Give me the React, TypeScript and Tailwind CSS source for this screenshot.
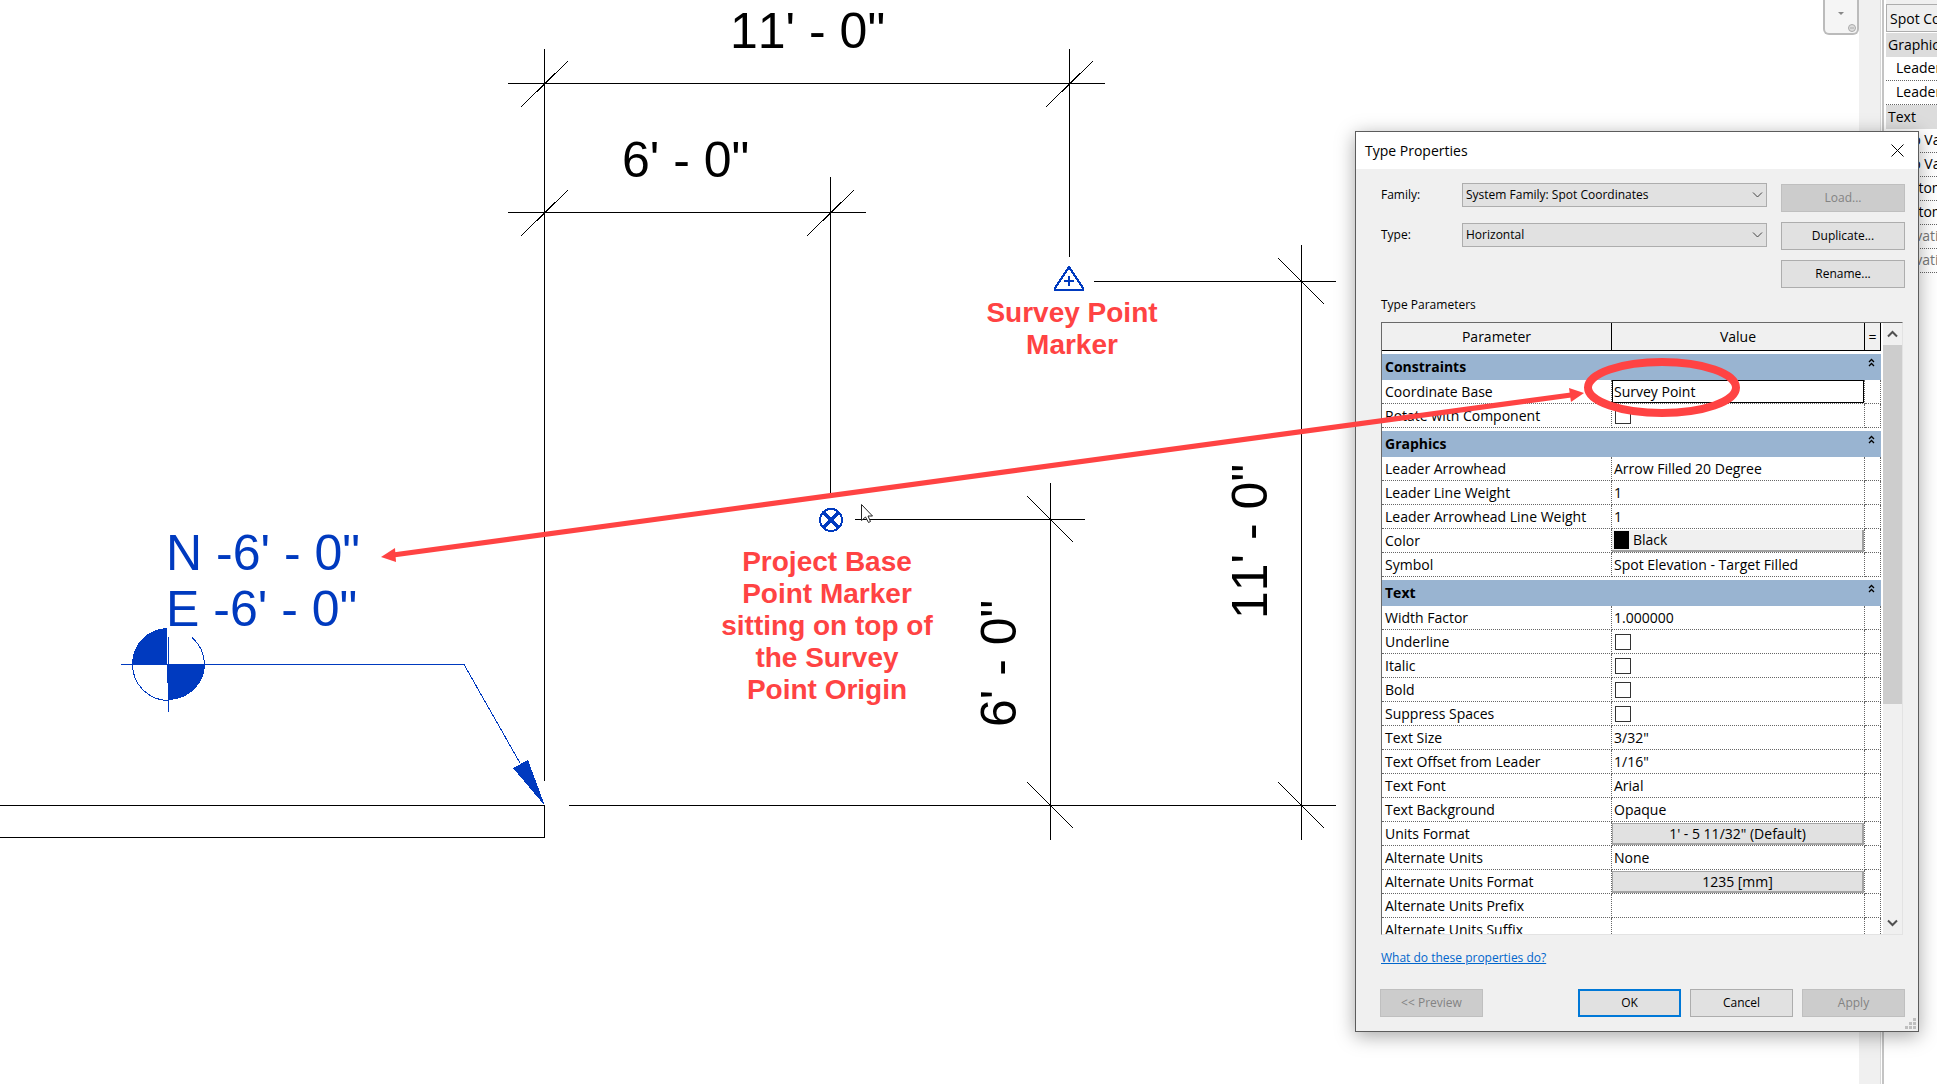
import React, { useState } from 'react';

type Row = { name: string; value?: string; kind?: 'text' | 'check' | 'button' | 'color' | 'edit' };
type Section = { title: string; rows: Row[] };

const sections: Section[] = [
  {
    title: 'Constraints',
    rows: [
      { name: 'Coordinate Base', value: 'Survey Point', kind: 'edit' },
      { name: 'Rotate with Component', kind: 'check' },
    ],
  },
  {
    title: 'Graphics',
    rows: [
      { name: 'Leader Arrowhead', value: 'Arrow Filled 20 Degree' },
      { name: 'Leader Line Weight', value: '1' },
      { name: 'Leader Arrowhead Line Weight', value: '1' },
      { name: 'Color', value: 'Black', kind: 'color' },
      { name: 'Symbol', value: 'Spot Elevation - Target Filled' },
    ],
  },
  {
    title: 'Text',
    rows: [
      { name: 'Width Factor', value: '1.000000' },
      { name: 'Underline', kind: 'check' },
      { name: 'Italic', kind: 'check' },
      { name: 'Bold', kind: 'check' },
      { name: 'Suppress Spaces', kind: 'check' },
      { name: 'Text Size', value: '3/32"' },
      { name: 'Text Offset from Leader', value: '1/16"' },
      { name: 'Text Font', value: 'Arial' },
      { name: 'Text Background', value: 'Opaque' },
      { name: 'Units Format', value: '1\' - 5 11/32" (Default)', kind: 'button' },
      { name: 'Alternate Units', value: 'None' },
      { name: 'Alternate Units Format', value: '1235 [mm]', kind: 'button' },
      { name: 'Alternate Units Prefix', value: '' },
      { name: 'Alternate Units Suffix', value: '' },
    ],
  },
];

const palette = [
  { name: 'Graphics', head: true },
  { name: 'Leader Line' },
  { name: 'Leader Arrowhead' },
  { name: 'Text', head: true },
  { name: 'Top Value' },
  { name: 'Top Value' },
  { name: 'Bottom Value' },
  { name: 'Bottom Value' },
  { name: 'Elevation', muted: true },
  { name: 'Elevation', muted: true },
];

// black dimension and witness lines
const hLines = [
  { y: 83, from: 508, to: 1105 },
  { y: 212, from: 508, to: 866 },
  { y: 519, from: 855, to: 1085 },
  { y: 281, from: 1094, to: 1336 },
  { y: 805, from: 569, to: 1336 },
  { y: 805, from: 0, to: 545 },
  { y: 837, from: 0, to: 545 },
];
const vLines = [
  { x: 544, from: 49, to: 781 },
  { x: 544, from: 805, to: 838 },
  { x: 1069, from: 49, to: 257 },
  { x: 830, from: 177, to: 494 },
  { x: 1050, from: 483, to: 840 },
  { x: 1301, from: 245, to: 840 },
];

const ticksUp = [[544, 83], [1069, 83], [544, 212], [830, 212]];
const ticksDown = [[1050, 519], [1050, 805], [1301, 281], [1301, 805]];

const Drawing: React.FC = () => (
  <svg className="absolute inset-0 w-full h-full" fontFamily='"Liberation Sans", Arial, sans-serif'>
    <g stroke="#000" shapeRendering="crispEdges">
      {hLines.map((l, i) => <line key={i} x1={l.from} y1={l.y + 0.5} x2={l.to} y2={l.y + 0.5} />)}
      {vLines.map((l, i) => <line key={i} x1={l.x + 0.5} y1={l.from} x2={l.x + 0.5} y2={l.to} />)}
      {ticksUp.map(([x, y], i) => <line key={i} x1={x - 23} y1={y + 24} x2={x + 24} y2={y - 22} />)}
      {ticksDown.map(([x, y], i) => <line key={i} x1={x - 23} y1={y - 23} x2={x + 23} y2={y + 23} />)}
    </g>

    <g fontSize="50" className="[font-kerning:none]">
      <text x="730" y="48">11' - 0"</text>
      <text x="622" y="177">6' - 0"</text>
      <text transform="translate(1016 727) rotate(-90)">6' - 0"</text>
      <text transform="translate(1267 619) rotate(-90)">11' - 0"</text>
    </g>

    {/* spot coordinate tag with its leader */}
    <g fill="#003abf" stroke="none">
      <g fontSize="50" className="[font-kerning:none]">
        <text x="166" y="570">N -6' - 0"</text>
        <text x="166" y="626">E -6' - 0"</text>
      </g>
      <g shapeRendering="crispEdges">
        <path d="M167 664V628A36 36 0 0 0 132 664Z" />
        <path d="M167 664H205A37 36 0 0 1 168 700Z" />
        <path d="M545 806L513 768L528 760Z" />
        <g stroke="#003abf" fill="none">
          <path d="M132.500 664.500A36 36 0 0 0 168.500 700.500" />
          <path d="M192 637.500A36 36 0 0 1 204.500 664.500" />
          <path d="M121 664.500H464L520 763" />
          <path d="M168.500 637V712" />
        </g>
      </g>
    </g>

    {/* survey point and project base point markers */}
    <g stroke="#003abf" strokeWidth="2" fill="none" shapeRendering="crispEdges">
      <path d="M1069 267L1083 288V290H1055V288Z" />
      <path d="M1069 276V286M1064 281H1074" />
      <circle cx="831" cy="520" r="11" />
      <path d="M823 512L839 528M839 512L823 528" strokeWidth="3" />
    </g>

    <g fill="#ff4343" fontSize="28" fontWeight="bold" textAnchor="middle">
      <text x="1072" y="322">Survey Point</text>
      <text x="1072" y="354">Marker</text>
      <text x="827" y="571">Project Base</text>
      <text x="827" y="603">Point Marker</text>
      <text x="827" y="635">sitting on top of</text>
      <text x="827" y="667">the Survey</text>
      <text x="827" y="699">Point Origin</text>
    </g>
  </svg>
);

const Markup: React.FC = () => (
  <svg className="absolute inset-0 w-full h-full pointer-events-none">
    <line x1="393" y1="555" x2="1571" y2="395" stroke="#ff4343" strokeWidth="5" />
    <path d="M381 557L395 548L396 562Z" fill="#ff4343" />
    <path d="M1584 393L1569 388L1571 402Z" fill="#ff4343" />
    <ellipse cx="1662" cy="387.500" rx="74" ry="25.500" fill="none" stroke="#ff4343" strokeWidth="8" />
    <path d="M861.500 504.500V520.500L865.500 517L868.500 522.500L870.500 521.500L868 516H872.500Z" fill="#fff" stroke="#222" />
  </svg>
);

const buttonBase = 'h-7 border flex items-center justify-center';
const buttonOn = 'bg-[#e1e1e1] border-[#adadad] text-black';
const buttonOff = 'bg-[#cccccc] border-[#bfbfbf] text-[#838383]';

const Picker: React.FC<{ id: string; label: string; value: string }> = ({ id, label, value }) => (
  <div className="flex items-center h-10">
    <label htmlFor={id} className="w-[81px]">{label}</label>
    <div className="relative flex-1">
      <select id={id} className="appearance-none w-full h-6 px-[3px] bg-[#e1e1e1] border border-[#adadad] rounded-none">
        <option>{value}</option>
      </select>
      <svg className="absolute right-1 top-2 pointer-events-none" width="11" height="8" fill="none" stroke="#444">
        <path d="M1 1.500L5.500 6L10 1.500" />
      </svg>
    </div>
  </div>
);

const Cell: React.FC<{ row: Row }> = ({ row }) => {
  const [checked, setChecked] = useState(false);
  if (row.kind === 'check') {
    return (
      <input
        type="checkbox" aria-label={row.name} checked={checked} onChange={e => setChecked(e.target.checked)}
        className="block appearance-none w-4 h-4 ml-[3px] border border-[#333] bg-white checked:bg-[#333]"
      />
    );
  }
  if (row.kind === 'edit') {
    return <input aria-label={row.name} defaultValue={row.value} className="block w-full h-[23px] pl-px border border-black bg-white outline-none" />;
  }
  if (row.kind === 'color') {
    return (
      <button className="flex items-center gap-1 w-full h-[22px] pl-0.5 bg-[#f0f0f0] border-r-2 border-b-2 border-[#a0a0a0]">
        <span className="w-[15px] h-[18px] bg-black"></span>
        {row.value}
      </button>
    );
  }
  if (row.kind === 'button') {
    return <button className="block w-full h-[22px] leading-5 bg-[#e1e1e1] border border-r-2 border-b-2 border-[#a5a5a5]">{row.value}</button>;
  }
  return <span className="pl-0.5">{row.value}</span>;
};

const TypeProperties: React.FC = () => (
  <div className="absolute left-[1355px] top-[131px] w-[564px] h-[901px] flex flex-col bg-[#f0f0f0] border border-[#5c5c5c] shadow-[0_4px_18px_rgba(0,0,0,0.35)] text-[12px] text-black">
    <div className="flex items-center justify-between h-[37px] pl-[9px] pr-3.5 bg-white">
      <h1 className="text-[14px]">Type Properties</h1>
      <button aria-label="Close">
        <svg width="13" height="13" stroke="#000" fill="none"><path d="M0.500 0.500L12.500 12.500M12.500 0.500L0.500 12.500" /></svg>
      </button>
    </div>

    <div className="flex gap-3.5 pl-[25px] pr-[13px] pt-1.5">
      <div className="flex-1">
        <Picker id="family" label="Family:" value="System Family: Spot Coordinates" />
        <Picker id="type" label="Type:" value="Horizontal" />
      </div>
      <div className="w-[124px] pt-[9px] flex flex-col gap-2.5">
        <button disabled className={`${buttonBase} ${buttonOff}`}>Load...</button>
        <button className={`${buttonBase} ${buttonOn}`}>Duplicate...</button>
        <button className={`${buttonBase} ${buttonOn}`}>Rename...</button>
      </div>
    </div>

    <h2 className="mt-2 mb-2 pl-[25px] leading-[18px]">Type Parameters</h2>

    <div className="flex-1 min-h-0 ml-[25px] mr-[15px] flex gap-0.5 overflow-hidden bg-white border border-t-[#696969] border-l-[#696969] border-r-[#e3e3e3] border-b-[#e3e3e3]">
      <div className="flex-1 overflow-hidden">
        <table className="w-full table-fixed border-separate border-spacing-0 text-[14px] leading-5">
          <colgroup>
            <col />
            <col className="w-[253px]" />
            <col className="w-4" />
          </colgroup>
          <thead>
            <tr className="h-7 bg-[#f0f0f0]">
              <th className="font-normal border-r border-b border-black p-0">Parameter</th>
              <th className="font-normal border-r border-b border-black p-0">Value</th>
              <th className="font-normal border-r border-b border-black p-0">=</th>
            </tr>
          </thead>
          {sections.map(section => (
            <tbody key={section.title}>
              <tr className="h-[3px]"><td colSpan={3} className="p-0"></td></tr>
              <tr className="h-[26px] bg-[#99b4d1]">
                <th colSpan={2} className="p-0 pl-[3px] text-left font-bold">{section.title}</th>
                <td className="p-0 align-top">
                  <button aria-label={`Collapse ${section.title}`} className="block ml-[3px] mt-1">
                    <svg width="7" height="9" fill="none" stroke="#000"><path d="M1 4L3.500 1.500L6 4M1 8L3.500 5.500L6 8" strokeWidth="1.3" /></svg>
                  </button>
                </td>
              </tr>
              {section.rows.map(row => (
                <tr key={row.name} className="h-6">
                  <td className="p-0 pl-[3px] border-r border-b border-dotted border-[#666] whitespace-nowrap">{row.name}</td>
                  <td className="p-0 border-r border-b border-dotted border-[#666] whitespace-nowrap"><Cell row={row} /></td>
                  <td className="p-0 border-r border-b border-dotted border-[#666]"></td>
                </tr>
              ))}
            </tbody>
          ))}
        </table>
      </div>
      <div className="w-[19px] flex flex-col items-center bg-[#f0f0f0]">
        <svg className="my-[7px]" width="11" height="8" fill="none" stroke="#505050" strokeWidth="2"><path d="M1 6.500L5.500 2L10 6.500" /></svg>
        <div className="w-full h-[359px] bg-[#cdcdcd]"></div>
        <svg className="mt-auto mb-[7px]" width="11" height="8" fill="none" stroke="#505050" strokeWidth="2"><path d="M1 1.500L5.500 6L10 1.500" /></svg>
      </div>
    </div>

    <a href="#" className="self-start ml-[25px] mt-3.5 leading-[18px] text-[#0066cc] underline">What do these properties do?</a>

    <div className="flex gap-[9px] pl-6 pr-[13px] mt-[22px] mb-3.5">
      <button disabled className={`${buttonBase} ${buttonOff} w-[103px] mr-auto`}>&lt;&lt; Preview</button>
      <button className="h-7 w-[103px] border-2 border-[#0078d7] bg-[#e1e1e1]">OK</button>
      <button className={`${buttonBase} ${buttonOn} w-[103px]`}>Cancel</button>
      <button disabled className={`${buttonBase} ${buttonOff} w-[103px]`}>Apply</button>
    </div>
    <svg className="absolute right-0.5 bottom-0.5" width="11" height="11" fill="#bfbfbf">
      <path d="M8 0h3v3h-3zM4 4h3v3h-3zM8 4h3v3h-3zM0 8h3v3h-3zM4 8h3v3h-3zM8 8h3v3h-3z" />
    </svg>
  </div>
);

const App: React.FC = () => (
  <div className={`relative flex min-h-screen overflow-hidden bg-white text-black font-["Open_Sans","Noto_Sans",sans-serif]`}>
    <main className="flex-1 min-w-0 flex justify-end items-start">
      <div className="w-9 h-[35px] flex flex-col justify-end items-end bg-[#f5f5f5] border-2 border-t-0 border-[#bbbbbb] rounded-b-md">
        <svg width="30" height="32" fill="none" stroke="#aaa">
          <path d="M11 11H17L14 14Z" fill="#888" stroke="none" />
          <circle cx="25" cy="27" r="3.500" fill="#ddd" />
          <path d="M23 27H27" />
        </svg>
      </div>
    </main>
    <div className="w-[22px] bg-[#f0f0f0] border-r border-[#d8d8d8]"></div>
    <aside className="w-[55px] shrink-0 overflow-hidden border-l-2 border-[#c4c4c4] pl-0.5 ml-px text-[14px] leading-6 whitespace-nowrap">
      <div className="h-1 bg-[#f0f0f0]"></div>
      <div className="h-7 mb-px pl-[3px] pt-0.5 bg-[#efefef] border border-r-0 border-[#adadad]">Spot Coordinates</div>
      {palette.map((item, i) => (
        <div
          key={i}
          className={item.head ? 'h-6 pl-0.5 bg-[#dcdcdc]' : `h-6 pl-2.5 leading-[22px] border-b border-dotted border-[#666] ${item.muted ? 'text-[#777]' : ''}`}
        >
          {item.name}
        </div>
      ))}
    </aside>
    <Drawing />
    <TypeProperties />
    <Markup />
  </div>
);

export default App;
